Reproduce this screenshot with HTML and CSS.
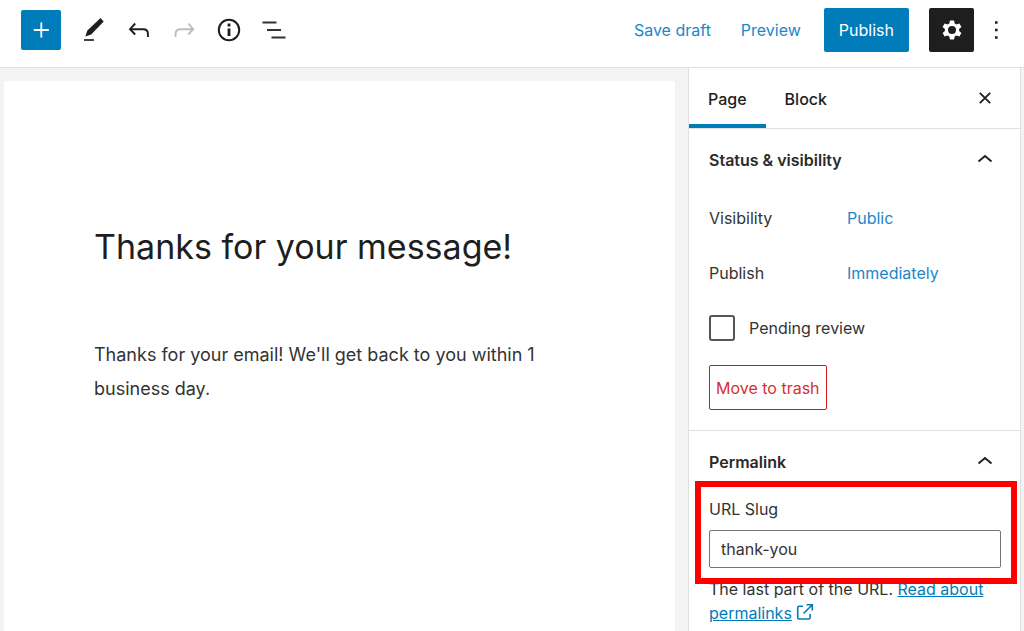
FILE: index.html
```html
<!DOCTYPE html>
<html lang="en">
<head>
<meta charset="utf-8">
<meta name="viewport" content="width=device-width, initial-scale=1">
<title>Edit page</title>
<link rel="stylesheet" href="styles.css">
</head>
<body>
<div class="editor">
  <header class="toolbar">
    <div class="tools">
      <button class="tool tool-add" type="button" aria-label="Add block"><svg width="40" height="40" viewBox="0 0 40 40"><path d="M20.300 12.500v15M12.800 20h15" stroke="#fff" stroke-width="1.800" fill="none"/></svg></button>
      <button class="tool" type="button" aria-label="Edit"><svg width="40" height="40" viewBox="0 0 40 40"><path d="M26.500 8l3.200 3.400L17.200 24.600 11.300 26.400l2.100-6z" fill="#1e1e1e"/><path d="M10 30h10" stroke="#444" stroke-width="2"/></svg></button>
      <button class="tool" type="button" aria-label="Undo"><svg width="40" height="40" viewBox="0 0 40 40"><path d="M16.200 13.500L11 19.200l5.200 5.300M11 19.200h13.300q4.600 0 4.600 4.600V27" stroke="#1e1e1e" stroke-width="1.900" fill="none"/></svg></button>
      <button class="tool" type="button" aria-label="Redo" disabled><svg width="40" height="40" viewBox="0 0 40 40"><path d="M24.300 13.500l4.900 5.700-4.900 5.300M29.200 19.200H16.400q-4.800 0-4.800 4.600V27" stroke="#bdbdbd" stroke-width="1.900" fill="none"/></svg></button>
      <button class="tool" type="button" aria-label="Details"><svg width="40" height="40" viewBox="0 0 40 40"><circle cx="20" cy="20" r="10.200" stroke="#1e1e1e" stroke-width="2" fill="none"/><path d="M20 13.500v3M20 18.500v7.500" stroke="#1e1e1e" stroke-width="2.800"/></svg></button>
      <button class="tool" type="button" aria-label="List view"><svg width="40" height="40" viewBox="0 0 40 40"><path d="M8.500 12.500h14M13 20h14M17.500 27.500h14" stroke="#333" stroke-width="2"/></svg></button>
    </div>
    <div class="actions">
      <button class="text-button" type="button">Save draft</button>
      <button class="text-button preview" type="button">Preview</button>
      <button class="publish" type="button">Publish</button>
      <button class="settings" type="button" aria-label="Settings"><svg width="24" height="24" viewBox="0 0 24 24"><path d="M10 2.500h4l.7 3 1.700 1 3-.9 2 3.400-2.300 2.100v1.800l2.300 2.100-2 3.400-3-.9-1.700 1-.7 3h-4l-.7-3-1.700-1-3 .9-2-3.400 2.300-2.100v-1.800L2.600 9l2-3.400 3 .9 1.700-1zM12 8a4 4 0 1 0 0 8 4 4 0 0 0 0-8z" fill="#fff" fill-rule="evenodd"/></svg></button>
      <button class="more" type="button" aria-label="Options"><svg width="24" height="24" viewBox="0 0 24 24"><path d="M11 3.200h2.600v2.600H11zM11 10.700h2.600v2.600H11zM11 18.200h2.600v2.600H11z" fill="#1e1e1e"/></svg></button>
    </div>
  </header>
  <div class="workspace">
    <main class="canvas">
      <article class="page">
        <h1 class="page-title">Thanks for your message!</h1>
        <p class="page-text">Thanks for your email! We'll get back to you within 1 business day.</p>
      </article>
    </main>
    <aside class="sidebar">
      <div class="tabs">
        <button class="tab tab-active" type="button">Page</button>
        <button class="tab" type="button">Block</button>
        <button class="close" type="button" aria-label="Close settings"><svg width="16" height="16" viewBox="0 0 16 16"><path d="M2.800 2.800l10.400 10.400M13.200 2.800L2.800 13.200" stroke="#1e1e1e" stroke-width="1.800"/></svg></button>
      </div>
      <section class="panel">
        <h2 class="panel-heading"><button class="panel-toggle" type="button">Status &amp; visibility<svg width="16" height="16" viewBox="0 0 16 16"><path d="M1.500 9.500L8 4l6.500 5.500" stroke="#1e1e1e" stroke-width="1.900" fill="none"/></svg></button></h2>
        <div class="panel-body">
          <div class="row"><span>Visibility</span><button class="value" type="button">Public</button></div>
          <div class="row"><span>Publish</span><button class="value" type="button">Immediately</button></div>
          <div class="check-row"><input class="check" type="checkbox" id="pending"><label for="pending">Pending review</label></div>
          <button class="trash" type="button">Move to trash</button>
        </div>
      </section>
      <section class="panel">
        <h2 class="panel-heading"><button class="panel-toggle" type="button">Permalink<svg width="16" height="16" viewBox="0 0 16 16"><path d="M1.500 9.500L8 4l6.500 5.500" stroke="#1e1e1e" stroke-width="1.900" fill="none"/></svg></button></h2>
        <div class="slug">
          <label for="slug">URL Slug</label>
          <input class="slug-input" type="text" id="slug" value="thank-you">
          <div class="highlight"></div>
        </div>
        <p class="help">The last part of the URL. <a class="link" href="#">Read about permalinks</a> <svg class="external" width="18" height="18" viewBox="0 0 18 18"><path d="M7 3.200H3.200q-1.500 0-1.500 1.500v9.800q0 1.500 1.500 1.500h9.400q1.500 0 1.500-1.500V11M10.500 1.700h5.800v5.800M16.300 1.700L7.500 10.500" stroke="#007cba" stroke-width="1.600" fill="none"/></svg></p>
      </section>
    </aside>
  </div>
</div>
</body>
</html>
```
FILE: styles.css
```css
* {
  box-sizing: border-box;
}

body {
  margin: 0;
  font-family: Inter, "Liberation Sans", sans-serif;
  font-size: 16px;
  line-height: 24px;
  color: #333;
  background: #fff;
}

button,
input {
  margin: 0;
  font: inherit;
  color: inherit;
}

button {
  padding: 0;
  border: 0;
  background: none;
}

svg {
  display: block;
}

.editor {
  display: flex;
  flex-direction: column;
  height: 100vh;
  overflow: hidden;
}

.toolbar {
  display: flex;
  flex: none;
  justify-content: space-between;
  align-items: center;
  padding: 8px 16px 15px 21px;
  border-bottom: 1px solid #e0e0e0;
}

.tools {
  display: flex;
  gap: 5px;
}

.tool-add {
  margin-right: 8px;
  border-radius: 2px;
  background: #007cba;
}

.actions {
  display: flex;
  align-items: center;
}

.text-button {
  margin-right: 30px;
  color: #1c86c7;
}

.preview {
  margin-right: 23px;
}

.publish {
  height: 44px;
  margin-right: 20px;
  padding: 0 15px;
  border-radius: 2px;
  background: #007cba;
  color: #fff;
}

.settings {
  display: grid;
  place-items: center;
  width: 45px;
  height: 44px;
  margin-right: 10px;
  border-radius: 2px;
  background: #1e1e1e;
}

.workspace {
  display: flex;
  flex: 1;
  min-height: 0;
  background: #f3f3f3;
}

.canvas {
  flex: 1;
  display: flex;
  min-width: 0;
  padding: 13px 13px 0 4px;
}

.page {
  flex: 1;
  padding: 142px 90px 0;
  background: #fff;
}

.page-title {
  margin: 0 0 67px;
  font-size: 34px;
  font-weight: 400;
  line-height: 48px;
  color: #1e1e1e;
}

.page-text {
  margin: 0;
  font-size: 18px;
  line-height: 34px;
}

.sidebar {
  flex: none;
  width: 333px;
  margin-right: 3px;
  border: solid #e0e0e0;
  border-width: 0 1px;
  background: #fff;
}

.tabs {
  display: flex;
  border-bottom: 1px solid #e0e0e0;
}

.tab {
  height: 60px;
  padding: 2px 19px 0;
  font-weight: 500;
  color: #1e1e1e;
}

.tab-active {
  box-shadow: inset 0 -4px #007cba;
}

.close {
  margin-left: auto;
  padding-right: 27px;
}

.panel + .panel {
  border-top: 1px solid #e0e0e0;
}

.panel-heading {
  margin: 0;
  font-size: 16px;
  font-weight: 600;
  color: #2a2a2a;
}

.panel-toggle {
  display: flex;
  justify-content: space-between;
  align-items: center;
  width: 100%;
  height: 61px;
  padding: 0 27px 0 20px;
}

.panel-body {
  padding: 0 20px 20px;
}

.row {
  display: grid;
  grid-template-columns: 138px 1fr;
  justify-items: start;
  padding: 16px 0 15px;
}

.value {
  color: #1c86c7;
}

.check-row {
  display: flex;
  align-items: center;
  gap: 14px;
  padding: 15px 0 24px;
}

.check {
  appearance: none;
  width: 26px;
  height: 26px;
  border: 2px solid #555;
  border-radius: 3px;
  background: #fff;
}

.trash {
  height: 45px;
  padding: 0 6px;
  border: 1px solid #cc1818;
  border-radius: 2px;
  color: #d63030;
}

.slug {
  position: relative;
  padding: 5px 19px 9px 20px;
}

.slug label {
  display: block;
}

.slug-input {
  display: block;
  width: 100%;
  height: 38px;
  margin-top: 9px;
  padding: 0 11px;
  border: 1px solid #757575;
  border-radius: 2px;
  background: #fff;
}

.highlight {
  position: absolute;
  inset: -11px 3px -7px 6px;
  border: 6px solid #f00;
  pointer-events: none;
}

.help {
  margin: 0;
  padding: 0 20px;
}

.link {
  color: #007cba;
}

.external {
  display: inline-block;
  vertical-align: -2px;
}
```
